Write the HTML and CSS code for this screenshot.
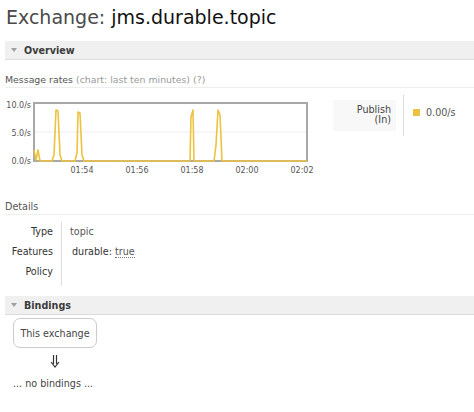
FILE: index.html
```html
<!DOCTYPE html>
<html>
<head>
<meta charset="utf-8">
<link rel="stylesheet" href="styles.css">
</head>
<body>
<h1 class="title">Exchange: <b class="name">jms.durable.topic</b></h1>

<div class="section-head"><span class="tri"></span>Overview</div>

<h3 class="sub">Message rates <span class="muted">(chart: last ten minutes) (?)</span></h3>

<div class="chart-row">
  <svg class="chart" width="320" height="82" viewBox="0 0 320 82">
    <line x1="34" y1="37" x2="307" y2="37" stroke="#eeeeee" stroke-width="1"/>
    <rect x="34" y="8" width="273" height="58" fill="none" stroke="#a8a8a8" stroke-width="2"/>
    <path d="M34,55 L36,65 L38,55 L40,66 L52,66 L54,60 L56,15 L58,16 L60,60 L62,66 L75,66 L77,58 L78,17 L80,18 L82,60 L84,66 L190,66 L191,22 L193,15 L194,66 L214,66 L216,50 L218,15 L220,20 L222,66 L307,66" fill="none" stroke="#edc240" stroke-width="1.6" stroke-linejoin="round"/>
    <g class="ytick">
      <text x="31" y="13" text-anchor="end">10.0/s</text>
      <text x="31" y="41" text-anchor="end">5.0/s</text>
      <text x="31" y="69" text-anchor="end">0.0/s</text>
    </g>
    <g class="xtick">
      <text x="82" y="78" text-anchor="middle">01:54</text>
      <text x="137" y="78" text-anchor="middle">01:56</text>
      <text x="192" y="78" text-anchor="middle">01:58</text>
      <text x="247" y="78" text-anchor="middle">02:00</text>
      <text x="302" y="78" text-anchor="middle">02:02</text>
    </g>
  </svg>
  <div class="legend">
    <div class="legend-label">Publish<br>(In)</div>
    <div class="legend-value"><span class="swatch"></span>0.00/s</div>
  </div>
</div>

<h3 class="sub">Details</h3>

<div class="details">
  <div class="keys">
    <div class="row">Type</div>
    <div class="row">Features</div>
    <div class="row">Policy</div>
  </div>
  <div class="vals">
    <div class="row">topic</div>
    <div class="row feat">durable: <abbr class="true">true</abbr></div>
    <div class="row"></div>
  </div>
</div>

<div class="section-head bindings-head"><span class="tri"></span>Bindings</div>

<div class="bindings">
  <div class="this-box">This exchange</div>
  <div class="arrow">
    <svg width="10" height="13" viewBox="0 0 10 13">
      <path d="M3.5,0 V9 M6.5,0 V9 M1,7 L5,12 L9,7" fill="none" stroke="#333333" stroke-width="1.2"/>
    </svg>
  </div>
  <div class="none">... no bindings ...</div>
</div>
</body>
</html>
```

FILE: styles.css
```css
html, body {
  margin: 0;
  padding: 0;
  background: #ffffff;
}
body {
  padding-top: 5px;
  font-family: "DejaVu Sans", Verdana, sans-serif;
  font-size: 9.6px;
  color: #484848;
}
.title {
  margin: 0 0 0 6px;
  font-size: 19px;
  line-height: 24px;
  font-weight: normal;
  color: #4a4a4a;
}
.title .name {
  font-weight: normal;
  color: #111111;
}
.section-head {
  margin: 12px 0 0 5px;
  height: 18px;
  background: #f0f0f0;
  border-bottom: 1px solid #dcdcdc;
  display: flex;
  align-items: center;
  padding-left: 6px;
  font-weight: bold;
  color: #3c3c3c;
}
.tri {
  width: 0;
  height: 0;
  border-left: 3px solid transparent;
  border-right: 3px solid transparent;
  border-top: 4px solid #a0a0a0;
  margin-right: 7px;
}
.sub {
  margin: 12px 0 0 5px;
  font-size: 9.4px;
  line-height: 15px;
  font-weight: normal;
  color: #555555;
  border-bottom: 1px solid #eeeeee;
}
.muted {
  color: #9a9a9a;
}
.chart-row {
  display: flex;
  align-items: flex-start;
  margin-top: 7px;
}
.chart {
  display: block;
}
.ytick text, .xtick text {
  font-family: "DejaVu Sans", Verdana, sans-serif;
  font-size: 8px;
  fill: #555555;
}
.legend {
  display: flex;
  align-items: flex-start;
  margin-left: 13px;
}
.legend-label {
  margin-top: 5px;
  width: 63px;
  height: 31px;
  box-sizing: border-box;
  background: #f8f8f8;
  text-align: right;
  padding: 5px 5px 0 0;
  line-height: 10px;
  color: #444444;
}
.legend-value {
  margin-left: 7px;
  height: 41px;
  border-left: 1px solid #dddddd;
  padding: 13px 0 0 9px;
  box-sizing: border-box;
  display: flex;
  align-items: flex-start;
  line-height: 10px;
  color: #555555;
}
.swatch {
  width: 7px;
  height: 7px;
  background: #edc240;
  margin: 1px 6px 0 0;
}
.chart-row + .sub {
  margin-top: 22px;
  font-size: 9.6px;
}
.details {
  display: flex;
  margin-top: 7px;
}
.keys {
  width: 62px;
  box-sizing: border-box;
  border-right: 1px solid #dddddd;
  padding: 0 8px 4px 0;
  text-align: right;
  color: #333333;
}
.vals {
  padding: 0 0 0 8px;
  color: #555555;
}
.row {
  height: 20px;
  line-height: 20px;
}
.feat {
  padding-left: 2px;
  color: #333333;
}
.true {
  text-decoration: none;
  border-bottom: 1px dotted #777777;
  color: #555555;
}
.bindings-head {
  margin-top: 10px;
}
.bindings {
  padding-left: 13px;
}
.this-box {
  margin-top: 3px;
  width: 84px;
  height: 30px;
  box-sizing: border-box;
  border: 1px solid #cccccc;
  border-radius: 7px;
  display: flex;
  align-items: center;
  justify-content: center;
  color: #444444;
}
.arrow {
  width: 84px;
  height: 13px;
  margin-top: 7px;
  display: flex;
  justify-content: center;
}
.arrow svg {
  display: block;
}
.none {
  margin-top: 9px;
  line-height: 14px;
  color: #444444;
}
```
